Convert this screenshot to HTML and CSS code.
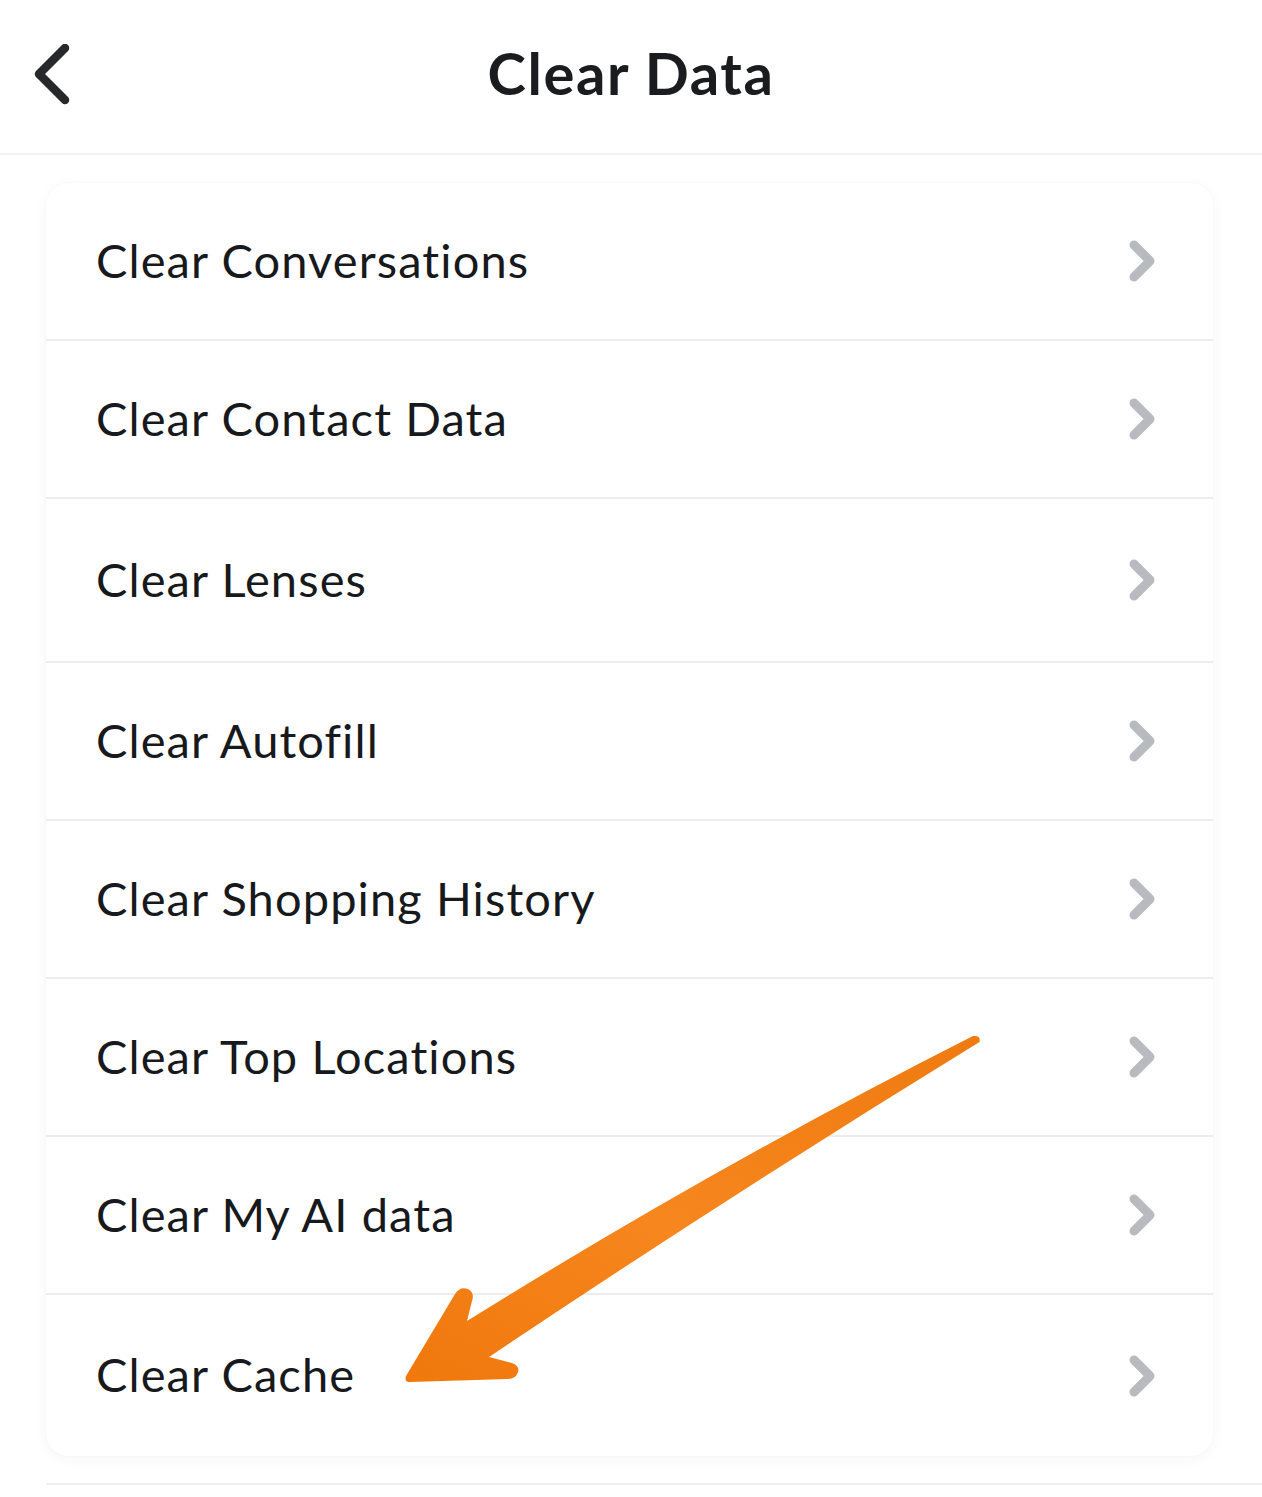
FILE: index.html
```html
<!DOCTYPE html>
<html lang="en">
<head>
<meta charset="utf-8">
<title>Clear Data</title>
<link rel="stylesheet" href="styles.css">
</head>
<body>
<div class="page">
  <header class="header">
    <button class="back" aria-label="Back">
      <svg width="40" height="64" viewBox="0 0 40 64"><path d="M32 4 L6 30 L32 56" fill="none" stroke="#26282b" stroke-width="8.5" stroke-linecap="round" stroke-linejoin="round"/></svg>
    </button>
    <h1 class="title">Clear Data</h1>
  </header>
  <main class="list-area">
    <ul class="card">
      <li class="row"><span class="label">Clear Conversations</span><svg class="chev" width="30" height="48" viewBox="0 0 30 48"><path d="M7 8 L23 24 L7 40" fill="none" stroke="#b7babe" stroke-width="9" stroke-linecap="round" stroke-linejoin="round"/></svg></li>
      <li class="row"><span class="label">Clear Contact Data</span><svg class="chev" width="30" height="48" viewBox="0 0 30 48"><path d="M7 8 L23 24 L7 40" fill="none" stroke="#b7babe" stroke-width="9" stroke-linecap="round" stroke-linejoin="round"/></svg></li>
      <li class="row tall"><span class="label">Clear Lenses</span><svg class="chev" width="30" height="48" viewBox="0 0 30 48"><path d="M7 8 L23 24 L7 40" fill="none" stroke="#b7babe" stroke-width="9" stroke-linecap="round" stroke-linejoin="round"/></svg></li>
      <li class="row"><span class="label">Clear Autofill</span><svg class="chev" width="30" height="48" viewBox="0 0 30 48"><path d="M7 8 L23 24 L7 40" fill="none" stroke="#b7babe" stroke-width="9" stroke-linecap="round" stroke-linejoin="round"/></svg></li>
      <li class="row"><span class="label">Clear Shopping History</span><svg class="chev" width="30" height="48" viewBox="0 0 30 48"><path d="M7 8 L23 24 L7 40" fill="none" stroke="#b7babe" stroke-width="9" stroke-linecap="round" stroke-linejoin="round"/></svg></li>
      <li class="row"><span class="label">Clear Top Locations</span><svg class="chev" width="30" height="48" viewBox="0 0 30 48"><path d="M7 8 L23 24 L7 40" fill="none" stroke="#b7babe" stroke-width="9" stroke-linecap="round" stroke-linejoin="round"/></svg></li>
      <li class="row"><span class="label">Clear My AI data</span><svg class="chev" width="30" height="48" viewBox="0 0 30 48"><path d="M7 8 L23 24 L7 40" fill="none" stroke="#b7babe" stroke-width="9" stroke-linecap="round" stroke-linejoin="round"/></svg></li>
      <li class="row last"><span class="label">Clear Cache</span><svg class="chev" width="30" height="48" viewBox="0 0 30 48"><path d="M7 8 L23 24 L7 40" fill="none" stroke="#b7babe" stroke-width="9" stroke-linecap="round" stroke-linejoin="round"/></svg></li>
    </ul>
    <div class="bottom-line"></div>
  </main>
  <svg class="arrow" width="1262" height="1497" viewBox="0 0 1262 1497" aria-hidden="true">
    <defs>
      <linearGradient id="og" x1="0" y1="1" x2="1" y2="0">
        <stop offset="0" stop-color="#f0780c"/>
        <stop offset="0.45" stop-color="#f6861e"/>
        <stop offset="1" stop-color="#ef7b10"/>
      </linearGradient>
    </defs>
    <path d="M973 1036 Q981 1035 979.5 1042 Q735 1192 489 1357 L512 1363 Q520 1366 518 1372 Q516 1379 508 1379 L410 1382 Q404 1382 406 1376 L455 1294 Q460 1286 468 1289 Q475 1293 472 1301 L467 1321 Q716 1166 973 1036 Z" fill="url(#og)"/>
  </svg>
</div>
</body>
</html>
```
FILE: styles.css
```css
html, body {
  margin: 0;
  padding: 0;
  background: #ffffff;
}
.page {
  position: relative;
  width: 1262px;
  height: 1497px;
  overflow: hidden;
  font-family: "Lato", "Noto Sans", sans-serif;
  color: #17191c;
}
.header {
  height: 153px;
  border-bottom: 2px solid #f3f3f3;
  display: flex;
  align-items: center;
  justify-content: center;
  position: relative;
}
.back {
  position: absolute;
  left: 33px;
  top: 44px;
  border: 0;
  background: none;
  padding: 0;
  display: flex;
}
.title {
  margin: 0 0 8px 0;
  font-size: 58px;
  font-weight: 700;
  color: #1a1c1f;
  letter-spacing: 1.6px;
}
.list-area {
  background: #ffffff;
  padding-top: 28px;
  height: 1342px;
  box-sizing: border-box;
}
.card {
  list-style: none;
  margin: 0 49px 0 46px;
  padding: 0;
  background: #ffffff;
  border-radius: 22px;
  box-shadow: 0 3px 14px rgba(0, 0, 0, 0.04), 0 0 2px rgba(0, 0, 0, 0.04);
}
.row {
  position: relative;
  height: 156px;
  border-bottom: 2px solid #ececec;
  display: flex;
  align-items: center;
  justify-content: space-between;
  padding: 0 56px 0 50px;
}
.row.tall {
  height: 162px;
}
.row::before {
  content: "";
  position: absolute;
  left: -46px;
  right: -49px;
  bottom: -2px;
  height: 2px;
  background: #f3f3f3;
  z-index: -1;
}
.row.last {
  border-bottom: 0;
  height: 161px;
}
.row.last::before {
  display: none;
}
.label {
  font-size: 47px;
  font-weight: 400;
  letter-spacing: 1.1px;
  color: #17191c;
  margin-top: -3px;
}
.chev {
  display: block;
}
.bottom-line {
  margin-top: 27px;
  margin-left: 46px;
  height: 2px;
  background: #f0f0f0;
}
.arrow {
  position: absolute;
  left: 0;
  top: 0;
  pointer-events: none;
}
```
